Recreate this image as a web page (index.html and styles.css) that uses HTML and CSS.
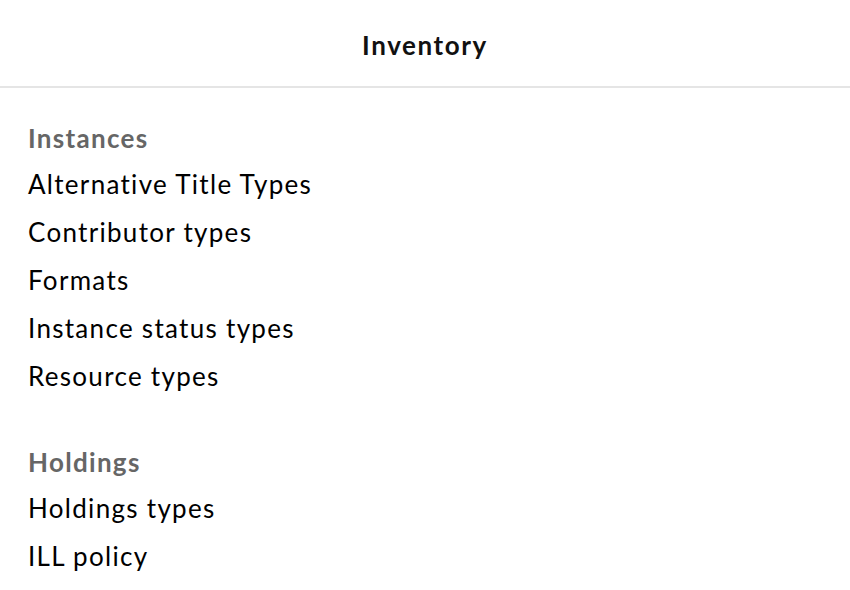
FILE: index.html
```html
<!DOCTYPE html>
<html>
<head>
<meta charset="utf-8">
<link rel="stylesheet" href="styles.css">
</head>
<body>
<div class="pane">
  <header class="pane-header"><h1 class="title">Inventory</h1></header>
  <nav class="nav">
    <section class="group">
      <div class="group-label">Instances</div>
      <a class="item">Alternative Title Types</a>
      <a class="item">Contributor types</a>
      <a class="item">Formats</a>
      <a class="item">Instance status types</a>
      <a class="item">Resource types</a>
    </section>
    <section class="group">
      <div class="group-label">Holdings</div>
      <a class="item">Holdings types</a>
      <a class="item">ILL policy</a>
    </section>
  </nav>
</div>
</body>
</html>
```
FILE: styles.css
```css
html, body { margin: 0; padding: 0; background: #fff; }
body { font-family: "Lato", "Noto Sans", sans-serif; color: #000; }
.pane { width: 850px; height: 590px; overflow: hidden; }
.pane-header {
  height: 88px;
  padding-top: 3px;
  border-bottom: 2px solid #e5e5e5;
  display: flex; align-items: center; justify-content: center;
  box-sizing: border-box;
}
.title { margin: 0; font-size: 26px; font-weight: 700; letter-spacing: 1.6px; color: #111; }
.nav { padding: 30px 28px 0; }
.group { display: flex; flex-direction: column; margin-bottom: 42px; }
.group-label { font-size: 26px; font-weight: 700; color: #666; height: 42px; line-height: 40px; letter-spacing: 1.3px; }
.item { font-size: 26px; line-height: 48px; letter-spacing: 1.3px; color: #000; }
```
